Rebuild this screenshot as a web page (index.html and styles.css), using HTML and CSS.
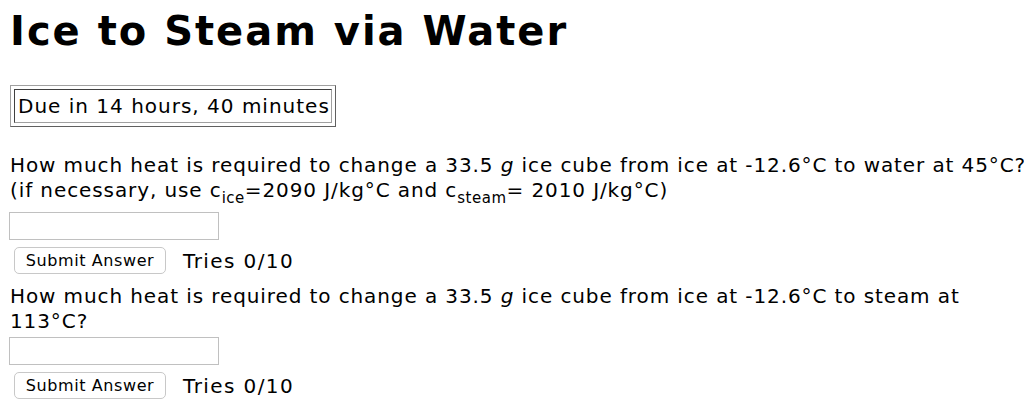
FILE: index.html
```html
<!DOCTYPE html>
<html>
<head>
<meta charset="utf-8">
<link rel="stylesheet" href="styles.css">
</head>
<body>
<div class="page">
  <h1 class="title">Ice to Steam via Water</h1>
  <div class="due-outer"><div class="due-inner">Due in 14 hours, 40 minutes</div></div>
  <div class="question first">
    <p class="qtext with-sub">How much heat is required to change a 33.5 <i>g</i> ice cube from ice at -12.6°C to water at 45°C?<br>(if necessary, use c<sub>ice</sub>=2090 J/kg°C and c<sub>steam</sub>= 2010 J/kg°C)</p>
    <input class="answer" type="text">
    <div class="row"><button class="submit">Submit Answer</button><span class="tries">Tries 0/10</span></div>
  </div>
  <div class="question">
    <p class="qtext">How much heat is required to change a 33.5 <i>g</i> ice cube from ice at -12.6°C to steam at 113°C?</p>
    <input class="answer" type="text">
    <div class="row"><button class="submit">Submit Answer</button><span class="tries">Tries 0/10</span></div>
  </div>
</div>
</body>
</html>
```
FILE: styles.css
```css
html, body {
  margin: 0;
  padding: 0;
  background: #fff;
  overflow: hidden;
}
.page {
  width: 1032px;
  padding: 0 0 0 10px;
  font-family: "DejaVu Sans", Verdana, sans-serif;
  font-size: 20px;
  letter-spacing: 0.9px;
  color: #000;
}
.title {
  margin: 0;
  padding-top: 7px;
  font-size: 40px;
  font-weight: bold;
  letter-spacing: 2px;
  line-height: 48px;
  white-space: nowrap;
}
.due-outer {
  display: inline-block;
  margin-top: 30px;
  border: 1px solid;
  border-color: #a0a0a0 #606060 #606060 #a0a0a0;
  padding: 3px;
}
.due-inner {
  border: 1px solid;
  border-color: #404040 #a0a0a0 #a0a0a0 #404040;
  padding: 2px 1px 2px 3px;
  line-height: 28px;
  letter-spacing: 1px;
  white-space: nowrap;
}
.question {
  display: flex;
  flex-direction: column;
  align-items: flex-start;
}
.question.first {
  margin-top: 26px;
}
.qtext {
  margin: 0;
  line-height: 25px;
}
.qtext.with-sub {
  padding-bottom: 9px;
}
.qtext i {
  font-style: italic;
}
sub {
  font-size: 15px;
  line-height: 0;
  vertical-align: -6px;
  letter-spacing: 0.5px;
}
.answer {
  margin: 0 0 0 -1px;
  width: 206px;
  height: 24px;
  border: 1px solid #c0c0c0;
  padding: 1px;
  box-sizing: content-box;
  outline: none;
}
.question + .question .answer {
  margin-top: 3px;
}
.row {
  display: flex;
  align-items: center;
  margin: 7px 0 10px 4px;
  height: 27px;
}
.submit {
  height: 27px;
  width: 152px;
  padding: 0;
  background: #fff;
  border: 1px solid #c8c8c8;
  border-radius: 5px;
  font-family: "DejaVu Sans", Verdana, sans-serif;
  font-size: 16px;
  letter-spacing: 0.6px;
  color: #000;
}
.tries {
  margin-left: 17px;
  white-space: nowrap;
  letter-spacing: 1.4px;
}
```
